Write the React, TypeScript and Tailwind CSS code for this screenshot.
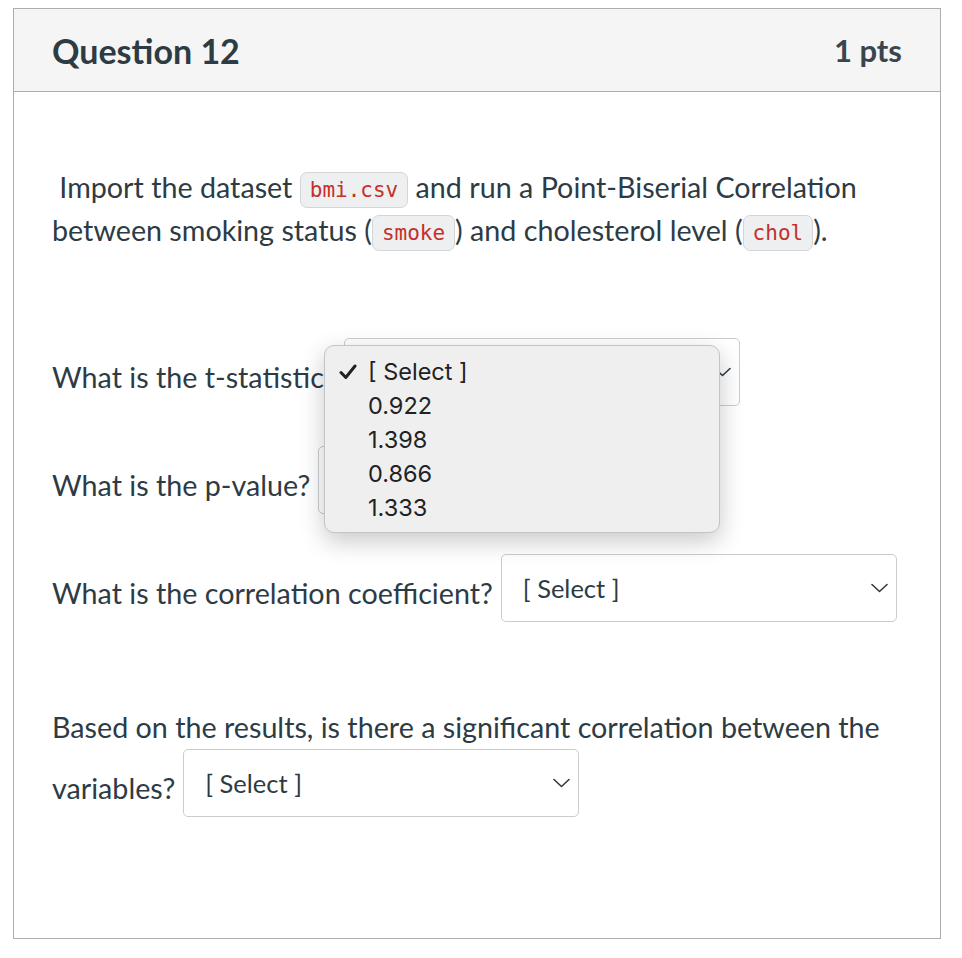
import React from 'react'

function Chevron() {
  return (
    <svg width="17" height="10" viewBox="0 0 17 10" fill="none" className="shrink-0">
      <polyline points="1,1.5 8.5,8.5 16,1.5" stroke="#2d3b45" strokeWidth="1.6" strokeLinecap="round" strokeLinejoin="round" />
    </svg>
  )
}

function Select() {
  return (
    <span className="ml-2 inline-flex h-[68px] w-[396px] items-center justify-between rounded-[5px] border border-[#c7cdd1] bg-white pl-[21px] pr-[8px] align-[6px] text-[25.5px] leading-[1.2]">
      <span>[ Select ]</span>
      <Chevron />
    </span>
  )
}

function Code({ children }: { children: React.ReactNode }) {
  return (
    <code className="inline-block rounded-[7px] border border-[#d3d5d8] bg-[#eeeff0] px-[9px] py-[6px] align-[1px] font-['DejaVu_Sans_Mono',monospace] text-[21px] leading-[22px] text-[#c4302b]">
      {children}
    </code>
  )
}

const options = ['0.922', '1.398', '0.866', '1.333']

export default function App() {
  return (
    <div className="min-h-[958px] bg-white pl-[13px] pt-2 font-['Lato',sans-serif] text-[#2d3b45]">
      <div className="flex h-[931px] w-[928px] flex-col border border-[#adadad]">
        {/* Header */}
        <div className="flex h-[83px] items-center justify-between border-b border-[#adadad] bg-[#f5f5f5] px-[38px]">
          <h2 className="text-[34px] font-bold">Question 12</h2>
          <span className="text-[31px] font-bold text-[#3a454d]">1 pts</span>
        </div>

        {/* Body */}
        <div className="relative px-[38px] pt-[74px] text-[28.7px] leading-[43px]">
          <p className="mb-[86px]">
            &nbsp;Import the dataset <Code>bmi.csv</Code> and run a Point-Biserial Correlation between smoking status (
            <Code>smoke</Code>) and cholesterol level (<Code>chol</Code>).
          </p>

          <p className="mb-[40px]">
            What is the t-statistic?
            <Select />
          </p>
          <p className="mb-[40px]">
            What is the p-value?
            <Select />
          </p>
          <p className="mb-[84px]">
            What is the correlation coefficient?
            <Select />
          </p>
          <p>
            Based on the results, is there a significant correlation between the variables?
            <Select />
          </p>

          {/* Native select popup */}
          <div className="absolute left-[310px] top-[253px] w-[396px] rounded-[10px] border border-[#c4c4c4] bg-[#efefef] pb-[7px] pt-[9px] font-['Inter',sans-serif] text-[23.5px] leading-[34px] text-[#222] shadow-[0_8px_24px_rgba(0,0,0,0.22)]">
            <div className="flex items-center">
              <span className="flex w-[43px] justify-center pl-[2px]">
                <svg width="18" height="16" viewBox="0 0 18 16" fill="none">
                  <polyline points="2,8.5 6.8,13.5 16,2" stroke="#222" strokeWidth="3" strokeLinecap="round" strokeLinejoin="round" />
                </svg>
              </span>
              <span>[ Select ]</span>
            </div>
            {options.map((o) => (
              <div key={o} className="pl-[43px]">
                {o}
              </div>
            ))}
          </div>
        </div>
      </div>
    </div>
  )
}
